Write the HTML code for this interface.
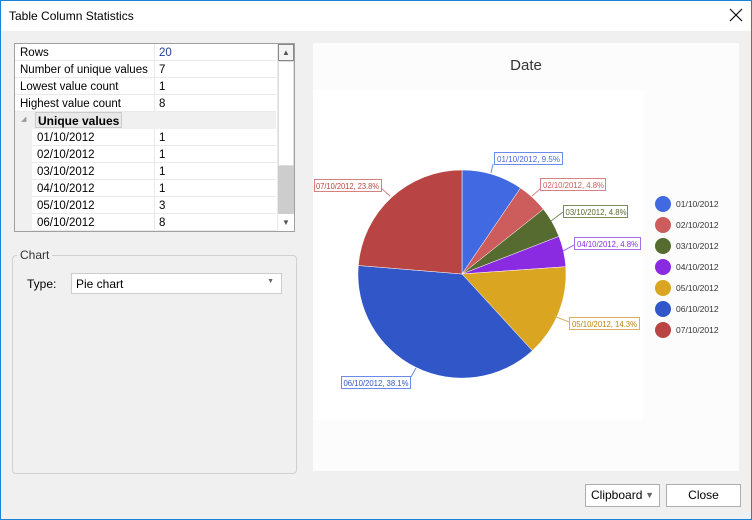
<!DOCTYPE html>
<html><head><style>
*{box-sizing:border-box;margin:0;padding:0}
body{width:752px;height:520px;background:#f0f0f0;font-family:"Liberation Sans",sans-serif;font-size:11.5px;color:#000;position:relative;overflow:hidden}
.frame{position:absolute;left:0;top:0;width:752px;height:520px;border:1px solid #1883d7;pointer-events:none}
.title{position:absolute;left:0;top:0;width:752px;height:31px;background:#fff}
.title span{position:absolute;left:9px;top:9px;font-size:12px}
.grid{position:absolute;left:14px;top:43px;width:281px;height:189px;border:1px solid #a0a0a0;background:#fff;overflow:hidden}
.row{position:absolute;left:0;height:17px;width:261px;border-bottom:1px solid #eaeaea}
.row .a{position:absolute;left:5px;top:3px}
.row .b{position:absolute;left:144px;top:3px}
.row:before{content:"";position:absolute;left:139px;top:0;height:17px;border-left:1px solid #eaeaea}
.sb{position:absolute;left:262px;top:0;width:17px;height:187px;background:#fff;border-left:1px solid #e8e8e8}
.fs{position:absolute;left:12px;top:255px;width:285px;height:219px;border:1px solid #d0d0d0;border-radius:4px}
.btn{position:absolute;top:484px;height:23px;border:1px solid #adadad;background:#fff;font-size:12px;text-align:center;line-height:21px}
</style></head><body>
<div class="title"><span>Table Column Statistics</span>
<svg style="position:absolute;left:729px;top:8px" width="14" height="14"><path d="M1 1L13 13M13 1L1 13" stroke="#000" stroke-width="1.1"/></svg></div>
<div class="grid">
<div class="row" style="top:0"><span class="a">Rows</span><span class="b" style="color:#1f3f8f">20</span></div>
<div class="row" style="top:17px"><span class="a">Number of unique values</span><span class="b">7</span></div>
<div class="row" style="top:34px"><span class="a">Lowest value count</span><span class="b">1</span></div>
<div class="row" style="top:51px"><span class="a">Highest value count</span><span class="b">8</span></div>
<div style="position:absolute;left:0;top:68px;width:261px;height:17px;background:#f0f0f0"><span style="position:absolute;left:6px;top:3px;font-size:7px;color:#999">◢</span><span style="position:absolute;left:20px;top:0px;height:16px;padding:1px 2px;border:1px solid #ccc;background:#e8e8e8;font-weight:bold;font-size:12px">Unique values</span></div>
<div style="position:absolute;left:0;top:85px;width:17px;height:110px;background:#f0f0f0"></div>
<div class="row r2" style="top:85px;left:17px;width:244px"><span class="a">01/10/2012</span><span class="b" style="left:127px">1</span></div>
<div class="row r2" style="top:102px;left:17px;width:244px"><span class="a">02/10/2012</span><span class="b" style="left:127px">1</span></div>
<div class="row r2" style="top:119px;left:17px;width:244px"><span class="a">03/10/2012</span><span class="b" style="left:127px">1</span></div>
<div class="row r2" style="top:136px;left:17px;width:244px"><span class="a">04/10/2012</span><span class="b" style="left:127px">1</span></div>
<div class="row r2" style="top:153px;left:17px;width:244px"><span class="a">05/10/2012</span><span class="b" style="left:127px">3</span></div>
<div class="row r2" style="top:170px;left:17px;width:244px"><span class="a">06/10/2012</span><span class="b" style="left:127px">8</span></div>
<style>.r2:before{left:122px}</style>
<div class="sb"><div style="position:absolute;left:0;top:0;width:16px;height:17px;border:1px solid #888;background:#f4f4f4;font-size:8px;text-align:center;line-height:15px;color:#555">▲</div>
<div style="position:absolute;left:0;top:17px;width:16px;height:105px;background:#fff;border:1px solid #ddd"></div>
<div style="position:absolute;left:0;top:122px;width:16px;height:48px;background:#cdcdcd"></div>
<div style="position:absolute;left:0;top:170px;width:16px;height:17px;font-size:8px;text-align:center;line-height:17px;color:#555">▼</div></div>
</div>
<div class="fs"></div>
<div style="position:absolute;left:17px;top:248px;padding:0 3px;background:#f0f0f0;color:#333;font-size:12px">Chart</div>
<div style="position:absolute;left:27px;top:277px;font-size:12px">Type:</div>
<div style="position:absolute;left:71px;top:273px;width:211px;height:21px;border:1px solid #ccc;background:#fff"><span style="position:absolute;left:4px;top:3px;font-size:12px">Pie chart</span><span style="position:absolute;right:7px;top:4px;font-size:7px;color:#666">▼</span></div>
<div style="position:absolute;left:313px;top:43px;width:426px;height:428px;background:#fcfcfc"></div>
<svg style="position:absolute;left:0;top:0" width="752" height="520" font-family="Liberation Sans, sans-serif">
<text x="526" y="70" font-size="15" fill="#333" text-anchor="middle">Date</text>
<rect x="313" y="90" width="330" height="330" fill="#fff"/>
<g stroke="#fff" stroke-width="0.5">
<path d="M462 274L462 170A104 104 0 0 1 520.5 188Z" fill="#4169e1"/>
<path d="M462 274L520.5 188A104 104 0 0 1 543.4 209.2Z" fill="#cd5c5c"/>
<path d="M462 274L543.4 209.2A104 104 0 0 1 558.9 236.4Z" fill="#556b2f"/>
<path d="M462 274L558.9 236.4A104 104 0 0 1 565.8 266.7Z" fill="#8a2be2"/>
<path d="M462 274L565.8 266.7A104 104 0 0 1 532.3 350.7Z" fill="#daa520"/>
<path d="M462 274L532.3 350.7A104 104 0 0 1 358.3 265.5Z" fill="#3056c8"/>
<path d="M462 274L358.3 265.5A104 104 0 0 1 462 170Z" fill="#b94444"/>
</g>
<g fill="none" stroke-width="1">
<line x1="493" y1="164" x2="491" y2="173" stroke="#6a8be8"/><rect x="494.5" y="152.5" width="68" height="12" fill="#fff" stroke="#6a8be8"/>
<line x1="540" y1="189" x2="532" y2="196" stroke="#d98080"/><rect x="540.5" y="178.5" width="65" height="12" fill="#fff" stroke="#d98080"/>
<line x1="563" y1="212" x2="551" y2="221" stroke="#7a8a5a"/><rect x="563.5" y="205.5" width="64" height="12" fill="#fff" stroke="#7a8a5a"/>
<line x1="574" y1="245" x2="563" y2="251" stroke="#a46ee8"/><rect x="574.5" y="237.5" width="66" height="12" fill="#fff" stroke="#a46ee8"/>
<line x1="569" y1="322" x2="554" y2="316" stroke="#d8b060"/><rect x="569.5" y="317.5" width="70" height="12" fill="#fff" stroke="#d8b060"/>
<line x1="411" y1="377" x2="416" y2="368" stroke="#6a8be8"/><rect x="341.5" y="376.5" width="69" height="12" fill="#fff" stroke="#6a8be8"/>
<line x1="381" y1="188" x2="390" y2="196" stroke="#d98080"/><rect x="314.5" y="179.5" width="67" height="12" fill="#fff" stroke="#d98080"/>
</g>
<g font-size="8">
<text x="497" y="162" fill="#4169e1" textLength="63" lengthAdjust="spacingAndGlyphs">01/10/2012, 9.5%</text>
<text x="543" y="188" fill="#cd5c5c" textLength="61" lengthAdjust="spacingAndGlyphs">02/10/2012, 4.8%</text>
<text x="565.5" y="215" fill="#556b2f" textLength="61" lengthAdjust="spacingAndGlyphs">03/10/2012, 4.8%</text>
<text x="577" y="247" fill="#8a2be2" textLength="61" lengthAdjust="spacingAndGlyphs">04/10/2012, 4.8%</text>
<text x="572" y="327" fill="#b8860b" textLength="65" lengthAdjust="spacingAndGlyphs">05/10/2012, 14.3%</text>
<text x="343.5" y="386" fill="#3056c8" textLength="65" lengthAdjust="spacingAndGlyphs">06/10/2012, 38.1%</text>
<text x="316" y="189" fill="#b94444" textLength="63" lengthAdjust="spacingAndGlyphs">07/10/2012, 23.8%</text>
</g>
<g font-size="8.5" fill="#333">
<circle cx="663" cy="204" r="8" fill="#4169e1"/><text x="676" y="207">01/10/2012</text>
<circle cx="663" cy="225" r="8" fill="#cd5c5c"/><text x="676" y="228">02/10/2012</text>
<circle cx="663" cy="246" r="8" fill="#556b2f"/><text x="676" y="249">03/10/2012</text>
<circle cx="663" cy="267" r="8" fill="#8a2be2"/><text x="676" y="270">04/10/2012</text>
<circle cx="663" cy="288" r="8" fill="#daa520"/><text x="676" y="291">05/10/2012</text>
<circle cx="663" cy="309" r="8" fill="#3056c8"/><text x="676" y="312">06/10/2012</text>
<circle cx="663" cy="330" r="8" fill="#b94444"/><text x="676" y="333">07/10/2012</text>
</g>
</svg>
<div class="btn" style="left:585px;width:75px;text-align:left;padding-left:5px">Clipboard<span style="position:absolute;right:5px;top:0;font-size:9px;color:#666">▼</span></div>
<div class="btn" style="left:666px;width:75px">Close</div>
<div class="frame"></div>
</body></html>
